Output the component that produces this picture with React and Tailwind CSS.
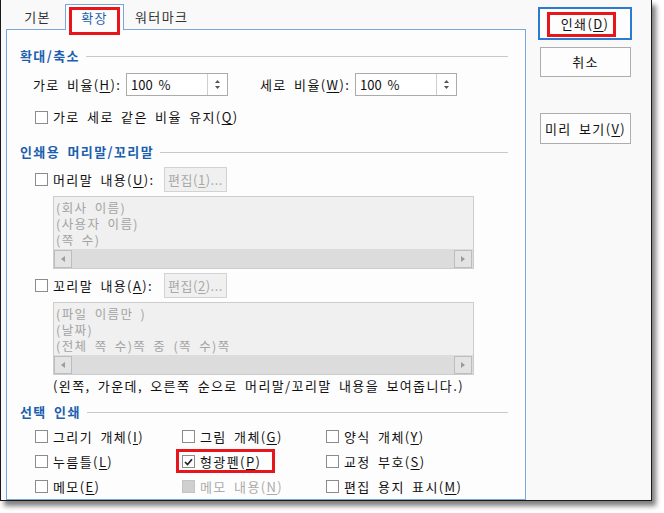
import React from 'react';

const font = { fontFamily: '"Noto Sans CJK KR", "Noto Sans", sans-serif' };

function Key({ children }) {
  return <span className="underline underline-offset-2">{children}</span>;
}

function Box({ checked = false, disabled = false }) {
  return (
    <span
      className={
        'inline-flex items-center justify-center w-[13px] h-[13px] border shrink-0 ' +
        (disabled ? 'border-[#c4c4c4] bg-[#cfcfcf]' : 'border-[#8c8c8c] bg-white')
      }
    >
      {checked && (
        <svg width="9" height="8" viewBox="0 0 9 8">
          <path d="M1 4 L3.5 6.5 L8 1.2" fill="none" stroke="#222" strokeWidth="1.7" />
        </svg>
      )}
    </span>
  );
}

function Heading({ children }) {
  return (
    <div className="flex items-center h-[18px] pl-[13px] pr-[17px]">
      <span className="text-[13px] font-bold text-[#1c5fae] leading-[18px] whitespace-nowrap">{children}</span>
      <div className="flex-1 h-px bg-[#c9c9c9] ml-[6px]" />
    </div>
  );
}

function Spin({ width }) {
  return (
    <div className="flex h-[23px] border border-[#ababab] bg-white" style={{ width }}>
      <div className="flex-1 flex items-center pl-[4px] text-[13px] leading-[16px] text-[#111] tracking-normal">100 %</div>
      <div className="w-[20px] border-l border-[#cfcfcf] flex flex-col items-center justify-center gap-[3px]">
        <svg width="5" height="3" viewBox="0 0 5 3"><path d="M0 3 L2.5 0 L5 3 Z" fill="#555" /></svg>
        <svg width="5" height="3" viewBox="0 0 5 3"><path d="M0 0 L2.5 3 L5 0 Z" fill="#555" /></svg>
      </div>
    </div>
  );
}

function ListBox({ lines }) {
  return (
    <div className="ml-[46px] w-[421px] h-[73px] border border-[#cdcdcd] bg-[#f0f0f0] flex flex-col">
      <div className="flex-1 pt-[3px] pl-[2px] overflow-hidden">
        {lines.map((l) => (
          <div key={l} className="h-[16px] text-[12.5px] leading-[16px] text-[#a3a3a3] whitespace-nowrap">{l}</div>
        ))}
      </div>
      <div className="h-[19px] bg-[#dcdcdc] flex justify-between items-center">
        <div className="w-[18px] h-[18px] border border-[#bdbdbd] bg-[#e3e3e3] flex items-center justify-center">
          <svg width="4" height="6" viewBox="0 0 4 6"><path d="M4 0 L0 3 L4 6 Z" fill="#9c9c9c" /></svg>
        </div>
        <div className="w-[18px] h-[18px] border border-[#bdbdbd] bg-[#e3e3e3] flex items-center justify-center mr-[1px]">
          <svg width="4" height="6" viewBox="0 0 4 6"><path d="M0 0 L4 3 L0 6 Z" fill="#9c9c9c" /></svg>
        </div>
      </div>
    </div>
  );
}

function EditButton({ children }) {
  return (
    <div className="w-[63px] h-[25px] border border-[#d3d3d3] bg-[#f0f0f0] flex items-center justify-center text-[13px] leading-[16px] text-[#a8a8a8] whitespace-nowrap tracking-[0.5px]">
      {children}
    </div>
  );
}

function Check({ label, checked, disabled, red }) {
  return (
    <div className="relative h-[25px] flex items-center gap-[5px]">
      <Box checked={checked} disabled={disabled} />
      <span className={'text-[13px] leading-[16px] whitespace-nowrap ' + (disabled ? 'text-[#ababab]' : 'text-[#111]')}>{label}</span>
      {red && <div className="absolute left-[-6px] top-0 w-[99px] h-[24px] border-[3px] border-[#e8151b]" />}
    </div>
  );
}

export default function App() {
  return (
    <div
      className="w-[664px] h-[513px] bg-white relative overflow-hidden tracking-[1.4px] [word-spacing:3px]"
      style={font}
    >
      <div className="w-[652px] h-[501px] bg-[#f9f9f9] border-l border-r border-b border-[#1a1a1a] shadow-[4px_5px_5px_rgba(0,0,0,0.5)] flex overflow-hidden">
        {/* left: tabs and page */}
        <div className="ml-[5px] w-[520px] flex flex-col">
          <div className="h-[30px] flex items-end text-[13px] leading-[16px]">
            <div className="w-[59px] h-[24px] flex items-center justify-center pl-[4px] text-[#333]">기본</div>
            <div className="relative w-[59px] h-[26px] border border-b-0 border-[#7aa7d8] bg-[#fdfdfd] flex items-center justify-center text-[#1c5fae] mb-[-1px] z-10">
              확장
              <div className="absolute left-[3px] top-[2px] w-[51px] h-[28px] border-[3px] border-[#e8151b]" />
            </div>
            <div className="h-[24px] flex items-center pl-[11px] text-[#333]">워터마크</div>
          </div>
          <div className="h-[480px] border border-[#7aa7d8] bg-[#fdfdfd] pt-[17px]">
            <Heading>확대/축소</Heading>
            <div className="mt-[8px] flex items-center h-[23px] text-[13px] leading-[16px] text-[#111]">
              <span className="ml-[26px] w-[93px] whitespace-nowrap">가로 비율(<Key>H</Key>):</span>
              <Spin width={102} />
              <span className="ml-[32px] w-[95px] whitespace-nowrap">세로 비율(<Key>W</Key>):</span>
              <Spin width={102} />
            </div>
            <div className="mt-[12px] h-[18px] flex items-center pl-[28px] gap-[5px] text-[13px] leading-[16px] text-[#111]">
              <Box />
              <span className="whitespace-nowrap">가로 세로 같은 비율 유지(<Key>Q</Key>)</span>
            </div>
            <div className="mt-[17px]">
              <Heading>인쇄용 머리말/꼬리말</Heading>
            </div>
            <div className="mt-[6px] h-[25px] flex items-center pl-[28px]">
              <div className="w-[129px] flex items-center gap-[5px] text-[13px] leading-[16px] text-[#111]">
                <Box />
                <span className="whitespace-nowrap">머리말 내용(<Key>U</Key>):</span>
              </div>
              <EditButton>편집(<Key>1</Key>)...</EditButton>
            </div>
            <div className="mt-[4px]">
              <ListBox lines={['(회사 이름)', '(사용자 이름)', '(쪽 수)']} />
            </div>
            <div className="mt-[4px] h-[25px] flex items-center pl-[28px]">
              <div className="w-[129px] flex items-center gap-[5px] text-[13px] leading-[16px] text-[#111]">
                <Box />
                <span className="whitespace-nowrap">꼬리말 내용(<Key>A</Key>):</span>
              </div>
              <EditButton>편집(<Key>2</Key>)...</EditButton>
            </div>
            <div className="mt-[4px]">
              <ListBox lines={['(파일 이름만 )', '(날짜)', '(전체 쪽 수)쪽 중 (쪽 수)쪽']} />
            </div>
            <div className="mt-[3px] h-[16px] flex items-center pl-[46px] text-[13px] leading-[16px] text-[#111] whitespace-nowrap">
              (왼쪽, 가운데, 오른쪽 순으로 머리말/꼬리말 내용을 보여줍니다.)
            </div>
            <div className="mt-[9px]">
              <Heading>선택 인쇄</Heading>
            </div>
            <div className="mt-[3px] pl-[28px] grid grid-cols-[147px_144px_1fr] auto-rows-[25px]">
              <Check label={<>그리기 개체(<Key>I</Key>)</>} />
              <Check label={<>그림 개체(<Key>G</Key>)</>} />
              <Check label={<>양식 개체(<Key>Y</Key>)</>} />
              <Check label={<>누름틀(<Key>L</Key>)</>} />
              <Check label={<>형광펜(<Key>P</Key>)</>} checked red />
              <Check label={<>교정 부호(<Key>S</Key>)</>} />
              <Check label={<>메모(<Key>E</Key>)</>} />
              <Check label={<>메모 내용(<Key>N</Key>)</>} disabled />
              <Check label={<>편집 용지 표시(<Key>M</Key>)</>} />
            </div>
          </div>
        </div>
        {/* right: buttons */}
        <div className="ml-[12px] pt-[7px] flex flex-col text-[13px] leading-[16px] text-[#111]">
          <div className="relative w-[94px] h-[33px] border-2 border-[#2a7bd1] bg-[#fdfdfd] flex items-center justify-center">
            인쇄(<Key>D</Key>)
            <div className="absolute left-[7px] top-[3px] w-[69px] h-[25px] border-[3px] border-[#e8151b]" />
          </div>
          <div className="mt-[7px] ml-[2px] w-[91px] h-[30px] border border-[#adadad] bg-[#fdfdfd] flex items-center justify-center">취소</div>
          <div className="mt-[36px] ml-[2px] w-[91px] h-[31px] border border-[#adadad] bg-[#fdfdfd] flex items-center justify-center whitespace-nowrap">
            미리 보기(<Key>V</Key>)
          </div>
        </div>
      </div>
    </div>
  );
}
